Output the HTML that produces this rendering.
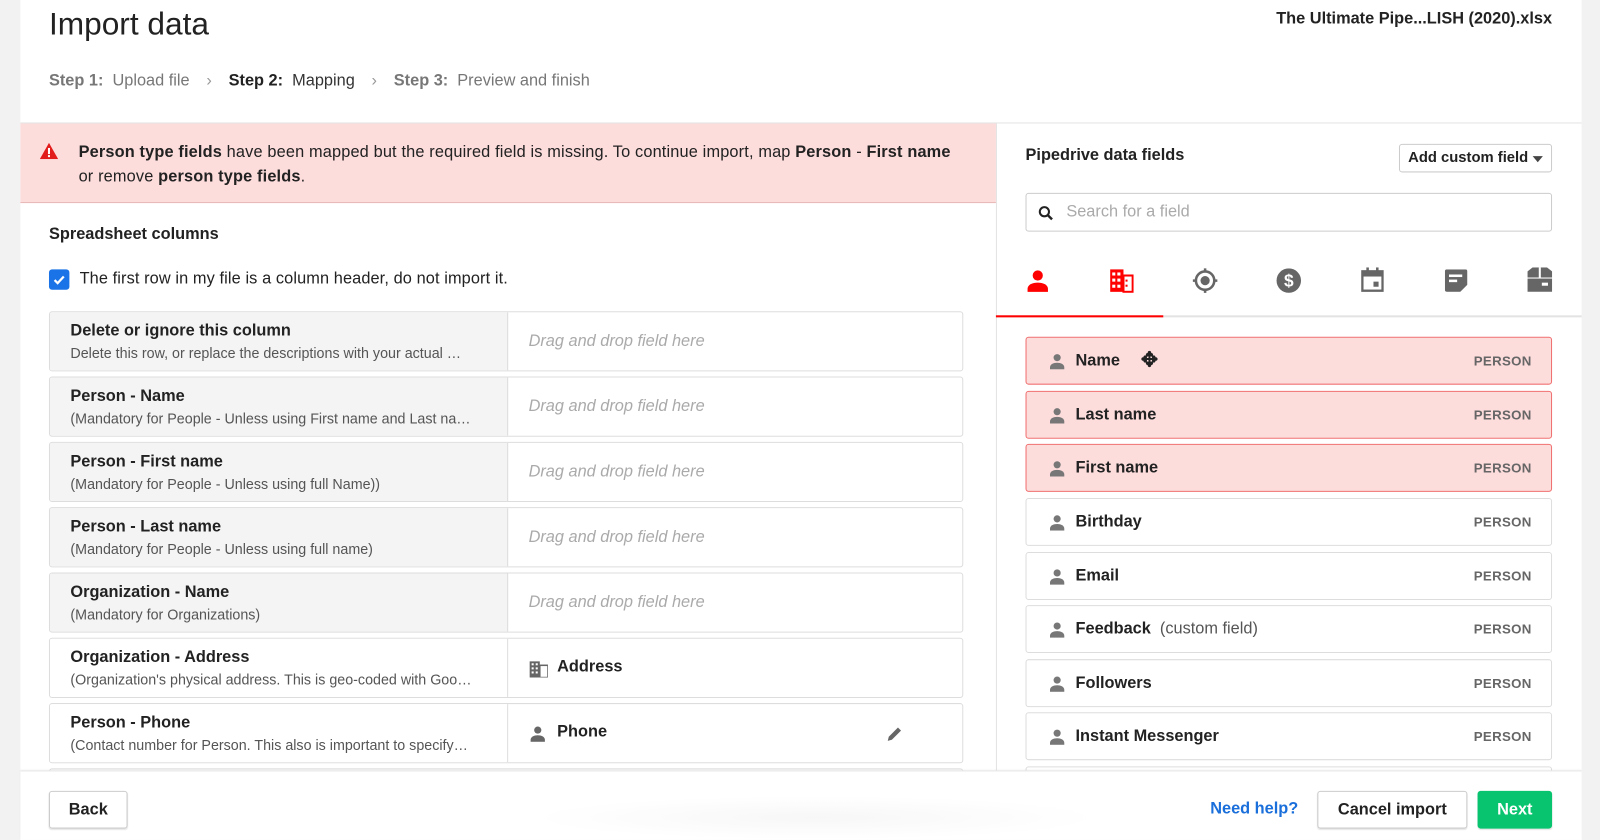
<!DOCTYPE html>
<html><head><meta charset="utf-8"><style>
*{box-sizing:border-box;margin:0;padding:0}
html,body{width:1600px;height:840px;overflow:hidden;background:#f2f2f2;font-family:"Liberation Sans",sans-serif;color:#222}
#w{position:absolute;left:0;top:0;width:1568px;height:823px;transform:scale(1.02041);transform-origin:0 0;background:#f2f2f2}
.a{position:absolute}
#main{left:20px;top:0;width:1530px;height:823px;background:#fff}
.t16{font-size:16px}
.b{font-weight:bold}
.row{position:absolute;left:48px;width:896px;height:59px;border:1px solid #ddd;border-radius:3px;overflow:hidden;background:#fff}
.row .l{position:absolute;left:0;top:0;width:449px;height:100%;background:#f4f4f4;border-right:1px solid #ddd;padding:9px 20px}
.row.w .l{background:#fff}
.row .l .h{font-size:16px;font-weight:bold;color:#222;line-height:20px}
.row .l .d{font-size:14px;color:#555;line-height:22px;white-space:nowrap;overflow:hidden}
.row .r{position:absolute;left:469px;top:20px;font-size:16px;font-style:italic;color:#aaa}
.f{position:absolute;left:1005px;width:516px;height:47px;border:1px solid #ddd;border-radius:3px;background:#fff}
.f.p{background:#fddcdc;border-color:#f07070}
.f .n{position:absolute;left:48px;top:14px;font-size:16px;font-weight:bold}
.f .n span{font-weight:normal;color:#555}
.f .t{position:absolute;right:19px;top:15px;font-size:13px;font-weight:bold;color:#666;letter-spacing:.3px}
.f svg{position:absolute;left:22px;top:15px}
.btn{position:absolute;top:775px;height:37px;border:1px solid #ccc;border-radius:3px;background:#fff;font-size:16px;font-weight:bold;text-align:center;line-height:35px;box-shadow:0 1px 1px rgba(0,0,0,.1)}
</style></head><body><div id="w">
<div id="main" class="a"></div>
<div class="a" style="left:48px;top:6px;font-size:31px;color:#222">Import data</div>
<div class="a b t16" style="right:47px;top:10px">The Ultimate Pipe...LISH (2020).xlsx</div>
<div class="a t16" style="left:48px;top:71px;color:#777"><b>Step 1:</b>&nbsp; Upload file <span style="margin:0 12px;color:#999">›</span> <b style="color:#222">Step 2:</b>&nbsp; <span style="color:#333">Mapping</span> <span style="margin:0 12px;color:#999">›</span> <b>Step 3:</b>&nbsp; Preview and finish</div>
<div class="a" style="left:20px;top:120px;width:1530px;height:1px;background:#e3e3e3"></div>
<div class="a" style="left:20px;top:121px;width:956px;height:78px;background:#fddcdc;border-bottom:1px solid #e8b8b8"></div>
<svg class="a" style="left:39px;top:140px" width="18" height="16" viewBox="0 0 18 16"><path d="M9 0L18 16H0Z" fill="#e21b1b"/><rect x="8" y="5" width="2" height="6" fill="#fff"/><rect x="8" y="12" width="2" height="2" fill="#fff"/></svg>
<div class="a t16" style="left:77px;top:138px;width:858px;line-height:24px;letter-spacing:.15px"><b>Person type fields</b> have been mapped but the required field is missing. To continue import, map <b>Person</b> - <b>First name</b> or remove <b>person type fields</b>.</div>
<div class="a" style="left:976px;top:121px;width:1px;height:635px;background:#e3e3e3"></div>
<div class="a b t16" style="left:48px;top:221px">Spreadsheet columns</div>
<div class="a" style="left:48px;top:264px;width:20px;height:20px;background:#1b73e8;border-radius:3px"><svg width="20" height="20"><path d="M5.5 10.5l3 3 6-6.5" stroke="#fff" stroke-width="2.2" fill="none"/></svg></div>
<div class="a t16" style="left:78px;top:265px;color:#222;letter-spacing:.1px">The first row in my file is a column header, do not import it.</div>

<div class="row" style="top:305px"><div class="l"><div class="h">Delete or ignore this column</div><div class="d">Delete this row, or replace the descriptions with your actual …</div></div><div class="r">Drag and drop field here</div></div>
<div class="row" style="top:369px"><div class="l"><div class="h">Person - Name</div><div class="d">(Mandatory for People - Unless using First name and Last na…</div></div><div class="r">Drag and drop field here</div></div>
<div class="row" style="top:433px"><div class="l"><div class="h">Person - First name</div><div class="d">(Mandatory for People - Unless using full Name))</div></div><div class="r">Drag and drop field here</div></div>
<div class="row" style="top:497px"><div class="l"><div class="h">Person - Last name</div><div class="d">(Mandatory for People - Unless using full name)</div></div><div class="r">Drag and drop field here</div></div>
<div class="row" style="top:561px"><div class="l"><div class="h">Organization - Name</div><div class="d">(Mandatory for Organizations)</div></div><div class="r">Drag and drop field here</div></div>
<div class="row w" style="top:625px"><div class="l"><div class="h">Organization - Address</div><div class="d">(Organization's physical address. This is geo-coded with Goo…</div></div>
<svg class="a" style="left:470px;top:22px" width="18" height="16" viewBox="0 0 18 16"><rect x="0" y="0" width="10" height="16" fill="#666"/><rect x="10" y="4" width="8" height="12" fill="#fff" stroke="#666" stroke-width="1.5"/><g fill="#fff"><rect x="2" y="2" width="2" height="2"/><rect x="6" y="2" width="2" height="2"/><rect x="2" y="6" width="2" height="2"/><rect x="6" y="6" width="2" height="2"/><rect x="2" y="10" width="2" height="2"/><rect x="6" y="10" width="2" height="2"/></g></svg>
<div class="a b t16" style="left:497px;top:19px">Address</div></div>
<div class="row w" style="top:689px"><div class="l"><div class="h">Person - Phone</div><div class="d">(Contact number for Person. This also is important to specify…</div></div>
<svg class="a" style="left:470px;top:21px" width="16" height="16" viewBox="0 0 16 16"><circle cx="8" cy="4.5" r="3.5" fill="#666"/><path d="M1 16v-2c0-3 3.5-4.5 7-4.5s7 1.5 7 4.5v2z" fill="#666"/></svg>
<div class="a b t16" style="left:497px;top:19px">Phone</div>
<svg class="a" style="left:820px;top:21px" width="16" height="16" viewBox="0 0 16 16"><path d="M1 15l1-4 9-9 3 3-9 9z" fill="#666"/></svg></div>
<div class="row" style="top:753px"></div>

<div class="a b t16" style="left:1005px;top:144px">Pipedrive data fields</div>
<div class="a b" style="left:1371px;top:141px;width:150px;height:28px;border:1px solid #ccc;border-radius:3px;font-size:14.5px;line-height:26px;padding-left:8px">Add custom field <span style="position:absolute;right:8px;top:11px;border:5px solid transparent;border-top:6px solid #444;border-bottom:0"></span></div>
<div class="a" style="left:1005px;top:189px;width:516px;height:38px;border:1px solid #ccc;border-radius:3px"><svg class="a" style="left:11px;top:11px" width="16" height="16"><circle cx="6.5" cy="6.5" r="4.5" stroke="#222" stroke-width="2" fill="none"/><path d="M10 10l4 4" stroke="#222" stroke-width="2.4"/></svg><div class="a t16" style="left:39px;top:9px;color:#aaa">Search for a field</div></div>

<svg class="a" style="left:1005px;top:263px" width="24" height="24" viewBox="0 0 24 24"><circle cx="12" cy="7" r="5" fill="#f00"/><path d="M2 23v-3c0-4 5-6 10-6s10 2 10 6v3z" fill="#f00"/></svg>
<svg class="a" style="left:1087px;top:263px" width="24" height="24" viewBox="0 0 24 24"><rect x="1" y="1" width="13" height="22" fill="#f00"/><rect x="14" y="7" width="9" height="16" fill="#fff" stroke="#f00" stroke-width="2"/><g fill="#fff"><rect x="3" y="4" width="3" height="3"/><rect x="8" y="4" width="3" height="3"/><rect x="3" y="10" width="3" height="3"/><rect x="8" y="10" width="3" height="3"/><rect x="3" y="16" width="3" height="3"/><rect x="8" y="16" width="3" height="3"/></g><g fill="#f00"><rect x="16" y="11" width="2" height="2"/><rect x="16" y="16" width="2" height="2"/></g></svg>
<svg class="a" style="left:1168px;top:262px" width="26" height="26" viewBox="0 0 26 26"><circle cx="13" cy="13" r="9" stroke="#666" stroke-width="2.5" fill="none"/><circle cx="13" cy="13" r="4.5" fill="#666"/><path d="M13 1v4M13 21v4M1 13h4M21 13h4" stroke="#666" stroke-width="2.5"/></svg>
<svg class="a" style="left:1251px;top:263px" width="24" height="24" viewBox="0 0 24 24"><circle cx="12" cy="12" r="12" fill="#666"/><text x="12" y="18" text-anchor="middle" font-size="17" font-weight="bold" fill="#fff" font-family="Liberation Sans">$</text></svg>
<svg class="a" style="left:1334px;top:262px" width="22" height="24" viewBox="0 0 22 24"><rect x="1" y="4" width="20" height="19" fill="none" stroke="#666" stroke-width="2.5"/><rect x="1" y="4" width="20" height="5" fill="#666"/><rect x="5" y="0" width="2.5" height="6" fill="#666"/><rect x="14.5" y="0" width="2.5" height="6" fill="#666"/><rect x="12" y="14" width="5" height="5" fill="#666"/></svg>
<svg class="a" style="left:1416px;top:264px" width="22" height="22" viewBox="0 0 22 22"><path d="M2 0h18a2 2 0 0 1 2 2v13l-7 7H2a2 2 0 0 1-2-2V2a2 2 0 0 1 2-2z" fill="#666"/><rect x="4" y="5" width="13" height="2.5" fill="#fff"/><rect x="4" y="10" width="8" height="2.5" fill="#fff"/></svg>
<svg class="a" style="left:1496px;top:262px" width="26" height="24" viewBox="0 0 26 24"><path d="M1 4l5-4h14l5 4v6H1z" fill="#666"/><rect x="12" y="0" width="2" height="10" fill="#fff"/><rect x="1" y="11" width="24" height="13" fill="#666"/><rect x="15" y="15" width="6" height="3" fill="#fff"/></svg>
<div class="a" style="left:976px;top:309px;width:574px;height:2px;background:#e3e3e3"></div>
<div class="a" style="left:976px;top:309px;width:164px;height:2px;background:#f00"></div>

<div class="f p" style="top:330px"><svg width="16" height="16" viewBox="0 0 16 16"><circle cx="8" cy="4.5" r="3.5" fill="#777"/><path d="M1 16v-2c0-3 3.5-4.5 7-4.5s7 1.5 7 4.5v2z" fill="#777"/></svg><div class="n">Name</div><div class="a" style="left:112px;top:9px;font-size:20px;font-weight:bold">✥</div><div class="t">PERSON</div></div>
<div class="f p" style="top:383px"><svg width="16" height="16" viewBox="0 0 16 16"><circle cx="8" cy="4.5" r="3.5" fill="#777"/><path d="M1 16v-2c0-3 3.5-4.5 7-4.5s7 1.5 7 4.5v2z" fill="#777"/></svg><div class="n">Last name</div><div class="t">PERSON</div></div>
<div class="f p" style="top:435px"><svg width="16" height="16" viewBox="0 0 16 16"><circle cx="8" cy="4.5" r="3.5" fill="#777"/><path d="M1 16v-2c0-3 3.5-4.5 7-4.5s7 1.5 7 4.5v2z" fill="#777"/></svg><div class="n">First name</div><div class="t">PERSON</div></div>
<div class="f" style="top:488px"><svg width="16" height="16" viewBox="0 0 16 16"><circle cx="8" cy="4.5" r="3.5" fill="#777"/><path d="M1 16v-2c0-3 3.5-4.5 7-4.5s7 1.5 7 4.5v2z" fill="#777"/></svg><div class="n">Birthday</div><div class="t">PERSON</div></div>
<div class="f" style="top:541px"><svg width="16" height="16" viewBox="0 0 16 16"><circle cx="8" cy="4.5" r="3.5" fill="#777"/><path d="M1 16v-2c0-3 3.5-4.5 7-4.5s7 1.5 7 4.5v2z" fill="#777"/></svg><div class="n">Email</div><div class="t">PERSON</div></div>
<div class="f" style="top:593px"><svg width="16" height="16" viewBox="0 0 16 16"><circle cx="8" cy="4.5" r="3.5" fill="#777"/><path d="M1 16v-2c0-3 3.5-4.5 7-4.5s7 1.5 7 4.5v2z" fill="#777"/></svg><div class="n">Feedback&nbsp; <span>(custom field)</span></div><div class="t">PERSON</div></div>
<div class="f" style="top:646px"><svg width="16" height="16" viewBox="0 0 16 16"><circle cx="8" cy="4.5" r="3.5" fill="#777"/><path d="M1 16v-2c0-3 3.5-4.5 7-4.5s7 1.5 7 4.5v2z" fill="#777"/></svg><div class="n">Followers</div><div class="t">PERSON</div></div>
<div class="f" style="top:698px"><svg width="16" height="16" viewBox="0 0 16 16"><circle cx="8" cy="4.5" r="3.5" fill="#777"/><path d="M1 16v-2c0-3 3.5-4.5 7-4.5s7 1.5 7 4.5v2z" fill="#777"/></svg><div class="n">Instant Messenger</div><div class="t">PERSON</div></div>
<div class="f" style="top:751px"></div>

<div class="a" style="left:20px;top:755px;width:1530px;height:68px;background:#fff;border-top:1px solid #e6e6e6;box-shadow:0 -1px 2px rgba(0,0,0,.05)"></div>
<div class="a" style="left:520px;top:780px;width:560px;height:43px;background:radial-gradient(ellipse at center,#f7f7f7 0%,#fff 70%)"></div>
<div class="btn" style="left:48px;width:77px">Back</div>
<div class="a b t16" style="left:1186px;top:784px;color:#1a6fdb">Need help?</div>
<div class="btn" style="left:1291px;width:147px">Cancel import</div>
<div class="btn" style="left:1448px;width:73px;background:#08c46e;border-color:#08c46e;color:#fff">Next</div>
</div></body></html>
